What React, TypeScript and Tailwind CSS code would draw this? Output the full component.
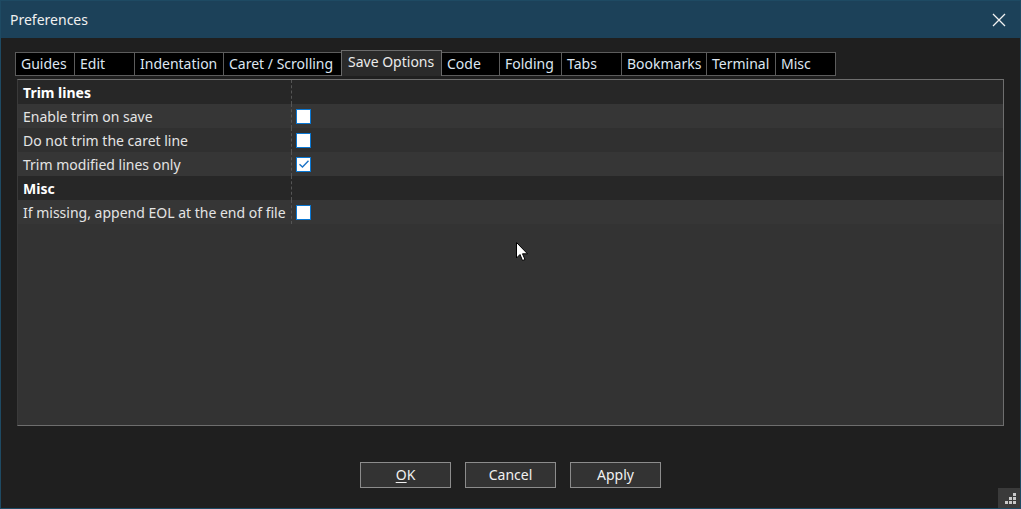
import { useState } from 'react';

const tabs = [
  { label: 'Guides', w: 60 },
  { label: 'Edit', w: 60 },
  { label: 'Indentation', w: 89 },
  { label: 'Caret / Scrolling', w: 118 },
  { label: 'Save Options', w: 101 },
  { label: 'Code', w: 58 },
  { label: 'Folding', w: 62 },
  { label: 'Tabs', w: 60 },
  { label: 'Bookmarks', w: 85 },
  { label: 'Terminal', w: 69 },
  { label: 'Misc', w: 60 },
];

type Row =
  | { kind: 'header'; label: string }
  | { kind: 'option'; label: string; checked: boolean };

const rows: Row[] = [
  { kind: 'header', label: 'Trim lines' },
  { kind: 'option', label: 'Enable trim on save', checked: false },
  { kind: 'option', label: 'Do not trim the caret line', checked: false },
  { kind: 'option', label: 'Trim modified lines only', checked: true },
  { kind: 'header', label: 'Misc' },
  { kind: 'option', label: 'If missing, append EOL at the end of file', checked: false },
];

function Checkbox({ checked }: { checked: boolean }) {
  return (
    <div className="w-[15px] h-[15px] border-[1.5px] border-[#0a78d4] bg-white flex items-center justify-center">
      {checked && (
        <svg width="12" height="12" viewBox="0 0 12 12">
          <path d="M1.5 6.2 L4.5 9 L10.5 2.8" fill="none" stroke="#1b73c7" strokeWidth="1.4" />
        </svg>
      )}
    </div>
  );
}

export default function App() {
  const [active] = useState('Save Options');

  return (
    <div
      className="w-[1021px] h-[509px] bg-[#1f1f1f] border border-[#1e4a63] flex flex-col relative overflow-hidden text-[#e8e8e8] text-[14px]"
      style={{ fontFamily: '"Noto Sans", "Open Sans", sans-serif' }}
    >
      {/* title bar */}
      <div className="h-[37px] bg-[#1c4159] flex items-center justify-between pl-[9px] pr-[14px] shrink-0">
        <span className="text-[14px] text-[#f0f0f0]">Preferences</span>
        <svg width="14" height="14" viewBox="0 0 14 14">
          <path d="M1 1 L13 13 M13 1 L1 13" stroke="#f2f2f2" strokeWidth="1.3" />
        </svg>
      </div>

      <div className="flex flex-col pl-[14px] pr-[16px] pt-[12px]">
        {/* tab strip */}
        <div className="flex items-end h-[26px]">
          {tabs.map((t, i) =>
            t.label === active ? (
              <div
                key={t.label}
                style={{ width: t.w }}
                className="h-[26px] bg-[#2a2a2a] border border-[#6b6b6b] border-b-0 -ml-px flex items-center px-[6px] text-[#eaeaea] leading-none pb-[3px]"
              >
                {t.label}
              </div>
            ) : (
              <div
                key={t.label}
                style={{ width: t.w }}
                className={`h-[24px] bg-black border-y border-r border-[#5c5c5c] flex items-center px-[5px] text-[#dde6f0] leading-none ${
                  i === 0 ? 'border-l' : ''
                }`}
              >
                {t.label}
              </div>
            )
          )}
        </div>

        {/* panel */}
        <div className="mt-[3px] ml-[2px] w-[987px] h-[347px] border border-[#6e6e6e] border-l-[#3a3a3a] bg-[#333333] flex flex-col">
          {rows.map((r, i) =>
            r.kind === 'header' ? (
              <div key={i} className="h-[24px] bg-[#272727] flex">
                <div className="w-[274px] pl-[5px] flex items-center font-bold text-white border-r border-dashed border-[#555]">
                  {r.label}
                </div>
              </div>
            ) : (
              <div key={i} className={`h-[24px] flex ${i % 2 === 1 ? 'bg-[#363636]' : 'bg-[#303030]'}`}>
                <div className="w-[274px] pl-[5px] flex items-center text-[#e4e4e4] border-r border-dashed border-[#555] whitespace-nowrap">
                  {r.label}
                </div>
                <div className="flex items-center pl-[4px]">
                  <Checkbox checked={r.checked} />
                </div>
              </div>
            )
          )}
        </div>
      </div>

      {/* buttons */}
      <div className="flex justify-center gap-[14px] mt-[36px]">
        {['OK', 'Cancel', 'Apply'].map((b) => (
          <button
            key={b}
            className="w-[91px] h-[26px] bg-[#333333] border border-[#8c8c8c] text-[#f0f0f0] text-[14px] leading-none"
          >
            {b === 'OK' ? (
              <>
                <span className="underline underline-offset-2">O</span>K
              </>
            ) : (
              b
            )}
          </button>
        ))}
      </div>

      {/* resize grip */}
      <div className="absolute right-0 bottom-0 w-[22px] h-[20px] bg-[#3a3a3a] flex items-end justify-end p-[3px]">
        <svg width="13" height="13" viewBox="0 0 13 13">
          <rect x="9" y="1" width="3" height="3" fill="#c8c8c8" />
          <rect x="5" y="5" width="3" height="3" fill="#c8c8c8" />
          <rect x="9" y="5" width="3" height="3" fill="#c8c8c8" />
          <rect x="1" y="9" width="3" height="3" fill="#c8c8c8" />
          <rect x="5" y="9" width="3" height="3" fill="#c8c8c8" />
          <rect x="9" y="9" width="3" height="3" fill="#c8c8c8" />
        </svg>
      </div>

      {/* mouse pointer */}
      <svg className="absolute left-[515px] top-[241px]" width="13" height="20" viewBox="0 0 13 20">
        <path d="M0.5 0.5 L0.5 16 L4 12.5 L6.5 18.5 L9 17.5 L6.5 11.8 L11.5 11.8 Z" fill="#ffffff" stroke="#000" strokeWidth="1" />
      </svg>
    </div>
  );
}
